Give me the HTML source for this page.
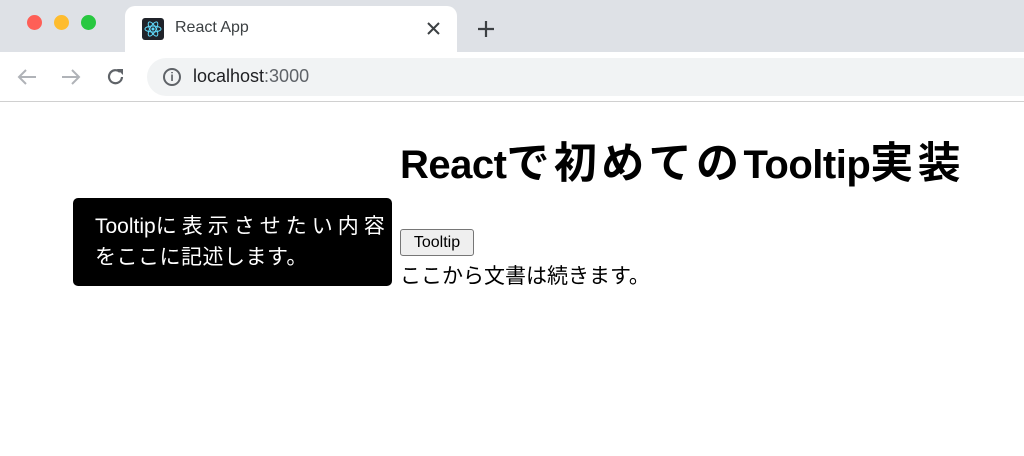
<!DOCTYPE html>
<html><head><meta charset="utf-8"><style>
body{margin:0;width:1024px;height:456px;overflow:hidden;background:#fff;font-family:"Liberation Sans","Noto Sans CJK JP",sans-serif;position:relative}
.abs{position:absolute;white-space:nowrap}
.h span{font-size:43px;letter-spacing:4.4px}
</style></head><body>
<div class="abs" style="left:0;top:0;width:1024px;height:52px;background:#dee1e6"></div>
<div class="abs" style="left:27px;top:15px;width:15px;height:15px;border-radius:50%;background:#fe5f57"></div>
<div class="abs" style="left:54px;top:15px;width:15px;height:15px;border-radius:50%;background:#febc2e"></div>
<div class="abs" style="left:81px;top:15px;width:15px;height:15px;border-radius:50%;background:#28c840"></div>
<div class="abs" style="left:125px;top:6px;width:332px;height:50px;background:#fff;border-radius:10px 10px 0 0"></div>
<div class="abs" style="left:142px;top:18px;width:22px;height:22px;background:#20232a;border-radius:3px"></div>
<svg class="abs" style="left:142px;top:18px" width="22" height="22" viewBox="0 0 22 22"><g fill="none" stroke="#61dafb" stroke-width="1"><ellipse cx="11" cy="11" rx="8" ry="3"/><ellipse cx="11" cy="11" rx="8" ry="3" transform="rotate(60 11 11)"/><ellipse cx="11" cy="11" rx="8" ry="3" transform="rotate(120 11 11)"/></g><circle cx="11" cy="11" r="1.5" fill="#61dafb"/></svg>
<div class="abs" style="left:175px;top:19px;font-size:16px;color:#3c4043">React App</div>
<svg class="abs" style="left:427px;top:22px" width="13" height="13" viewBox="0 0 13 13"><path d="M1 1L12 12M12 1L1 12" stroke="#3c4043" stroke-width="2"/></svg>
<svg class="abs" style="left:477px;top:20px" width="18" height="18" viewBox="0 0 18 18"><path d="M9 1V17M1 9H17" stroke="#3c4043" stroke-width="2.2"/></svg>
<svg class="abs" style="left:17px;top:68px" width="20" height="18" viewBox="0 0 20 18"><path d="M19 9H2M9 2L2 9L9 16" fill="none" stroke="#b0b3b8" stroke-width="2"/></svg>
<svg class="abs" style="left:61px;top:68px" width="20" height="18" viewBox="0 0 20 18"><path d="M1 9H18M11 2L18 9L11 16" fill="none" stroke="#b0b3b8" stroke-width="2"/></svg>
<svg class="abs" style="left:106px;top:67px" width="20" height="20" viewBox="0 0 20 20"><path d="M16 10A6.5 6.5 0 1 1 14 5" fill="none" stroke="#5f6368" stroke-width="2.2"/><path d="M11 2H17V8Z" fill="#5f6368"/></svg>
<div class="abs" style="left:147px;top:58px;width:900px;height:38px;background:#f1f3f4;border-radius:19px"></div>
<div class="abs" style="left:163px;top:68px;width:14px;height:14px;border:2px solid #5f6368;border-radius:50%;font-size:12px;text-align:center;line-height:14px;color:#5f6368;font-weight:bold">i</div>
<div class="abs" style="left:193px;top:66px;font-size:18px;color:#202124">localhost<span style="color:#5f6368">:3000</span></div>
<div class="abs" style="left:0;top:101px;width:1024px;height:1px;background:#d0d0d0"></div>
<div class="abs h" style="left:400px;top:140px;font-size:40px;font-weight:bold;color:#000;line-height:48px;letter-spacing:-0.5px">React<span>で初めての</span>Tooltip<span>実装</span></div>
<div class="abs" style="left:73px;top:198px;width:319px;height:88px;background:#000;border-radius:5px"></div>
<div class="abs" style="left:95px;top:211px;font-size:21px;line-height:31px;color:#fff">Tooltip<span style="letter-spacing:5px">に表示させたい内容</span></div>
<div class="abs" style="left:95px;top:242px;font-size:21px;line-height:31px;color:#fff;letter-spacing:0.5px">をここに記述します。</div>
<div class="abs" style="left:400px;top:229px;width:72px;height:25px;border:1px solid #767676;border-radius:3px;background:#efefef;font-size:16px;text-align:center;line-height:25px">Tooltip</div>
<div class="abs" style="left:400px;top:260px;font-size:21px;color:#000">ここから文書は続きます。</div>
</body></html>
